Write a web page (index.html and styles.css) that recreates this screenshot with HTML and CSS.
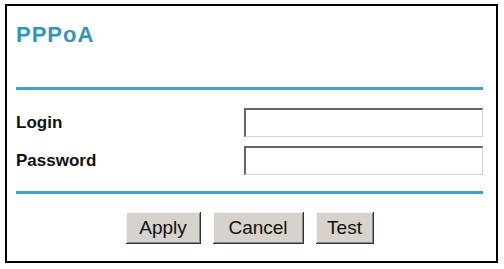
FILE: index.html
```html
<!DOCTYPE html>
<html>

<head>
  <title>PPPoA</title>
  <link rel="stylesheet" href="styles.css">
</head>

<body>
  <div class="panel">
    <h1 class="title">PPPoA</h1>
    <div class="rule rule-top"></div>
    <div class="row">
      <label class="label" for="login">Login</label>
      <input class="field" id="login" type="text">
    </div>
    <div class="row row-second">
      <label class="label" for="password">Password</label>
      <input class="field" id="password" type="password">
    </div>
    <div class="rule rule-bottom"></div>
    <div class="buttons">
      <button class="btn btn-apply">Apply</button>
      <button class="btn btn-cancel">Cancel</button>
      <button class="btn btn-test">Test</button>
    </div>
  </div>
</body>

</html>
```

FILE: styles.css
```css
body {
  margin: 0;
  background: #fff;
  font-family: "Liberation Sans", Arial, sans-serif;
  color: #111;
}

.panel {
  box-sizing: border-box;
  height: 259px;
  margin: 4px 6px 0 5px;
  padding: 0 13px 0 9px;
  border: 2px solid #000;
}

.title {
  margin: 0;
  padding-top: 18px;
  font-size: 22px;
  line-height: 22px;
  font-weight: bold;
  letter-spacing: 1px;
  color: #3096bd;
}

.rule {
  height: 3px;
  background: #43a2c0;
}

.rule-top {
  margin-top: 41px;
}

.rule-bottom {
  margin-top: 16px;
}

.row {
  display: flex;
  align-items: center;
  margin-top: 18px;
}

.row-second {
  margin-top: 9px;
}

.label {
  width: 228px;
  font-size: 17px;
  font-weight: bold;
}

.field {
  box-sizing: border-box;
  width: 239px;
  height: 29px;
  margin: 0;
  padding: 0 4px;
  background: #fff;
  border-top: 2px solid #666;
  border-left: 2px solid #666;
  border-right: 1px solid #d2d2d2;
  border-bottom: 1px solid #d2d2d2;
  outline: none;
}

.buttons {
  display: flex;
  justify-content: center;
  gap: 12px;
  margin-top: 18px;
}

.btn {
  box-sizing: border-box;
  height: 32px;
  padding: 0;
  border: none;
  background: #d6d3cc;
  font-family: "Liberation Sans", Arial, sans-serif;
  font-size: 19px;
  color: #111;
  box-shadow: inset -1px -1px #333, inset 1px 1px #f4f4f4, inset -2px -2px #8a8a8a;
}

.btn-apply {
  width: 75px;
}

.btn-cancel {
  width: 91px;
}

.btn-test {
  width: 58px;
}
```
